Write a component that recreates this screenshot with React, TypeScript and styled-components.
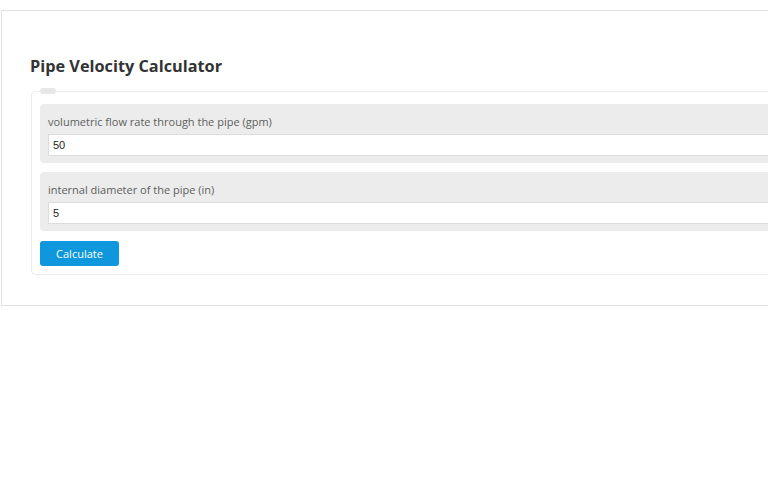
import React from "react";
import styled, { createGlobalStyle } from "styled-components";

const Global = createGlobalStyle`
  html, body { margin: 0; padding: 0; background: #fff; overflow: hidden; }
  body { font-family: "Open Sans", "Liberation Sans", sans-serif; }
`;

const Page = styled.div`
  width: 900px;
  padding: 10px 0 0 1px;
`;

const Panel = styled.div`
  border: 1px solid #e2e2e2;
  border-right: none;
  padding: 45px 0 30px 29px;
`;

const Title = styled.h2`
  margin: 0 0 12px -1px;
  font-family: "Open Sans", "Liberation Sans", sans-serif;
  font-weight: 700;
  font-size: 16.3px;
  line-height: 20px;
  color: #333;
`;

const Form = styled.fieldset`
  margin: 0;
  border: 1px solid #ececec;
  border-right: none;
  border-radius: 5px 0 0 5px;
  padding: 10px 0 8px 8px;
  display: flex;
  flex-direction: column;
  gap: 9px;
`;

const Legend = styled.legend`
  width: 16px;
  height: 6px;
  padding: 0;
  border-radius: 3px;
  background: #e6e7e6;
`;

const Group = styled.div`
  background: #ebeceb;
  border-radius: 4px 0 0 4px;
  padding: 10px 0 7px 8px;
  display: flex;
  flex-direction: column;
  gap: 4px;
`;

const Label = styled.label`
  font-size: 11px;
  line-height: 16px;
  color: #5f5f5f;
`;

const Input = styled.input`
  box-sizing: border-box;
  height: 22px;
  width: 100%;
  border: 1px solid #dcdcdc;
  border-right: none;
  background: #fff;
  padding: 0 4px;
  font-family: "Liberation Sans", Arial, sans-serif;
  font-size: 11px;
  color: #222;
  outline: none;
`;

const Button = styled.button`
  align-self: flex-start;
  margin-top: 1px;
  width: 79px;
  height: 25px;
  border: none;
  border-radius: 3px;
  background: #0e97dc;
  color: #fff;
  font-family: "Open Sans", "Liberation Sans", sans-serif;
  font-size: 11px;
  cursor: pointer;
`;

const fields = [
  { label: "volumetric flow rate through the pipe (gpm)", value: "50" },
  { label: "internal diameter of the pipe (in)", value: "5" },
];

export default function App() {
  return (
    <>
      <Global />
      <Page>
        <Panel>
          <Title>Pipe Velocity Calculator</Title>
          <Form>
            <Legend />
            {fields.map((f) => (
              <Group key={f.label}>
                <Label>{f.label}</Label>
                <Input defaultValue={f.value} />
              </Group>
            ))}
            <Button>Calculate</Button>
          </Form>
        </Panel>
      </Page>
    </>
  );
}
